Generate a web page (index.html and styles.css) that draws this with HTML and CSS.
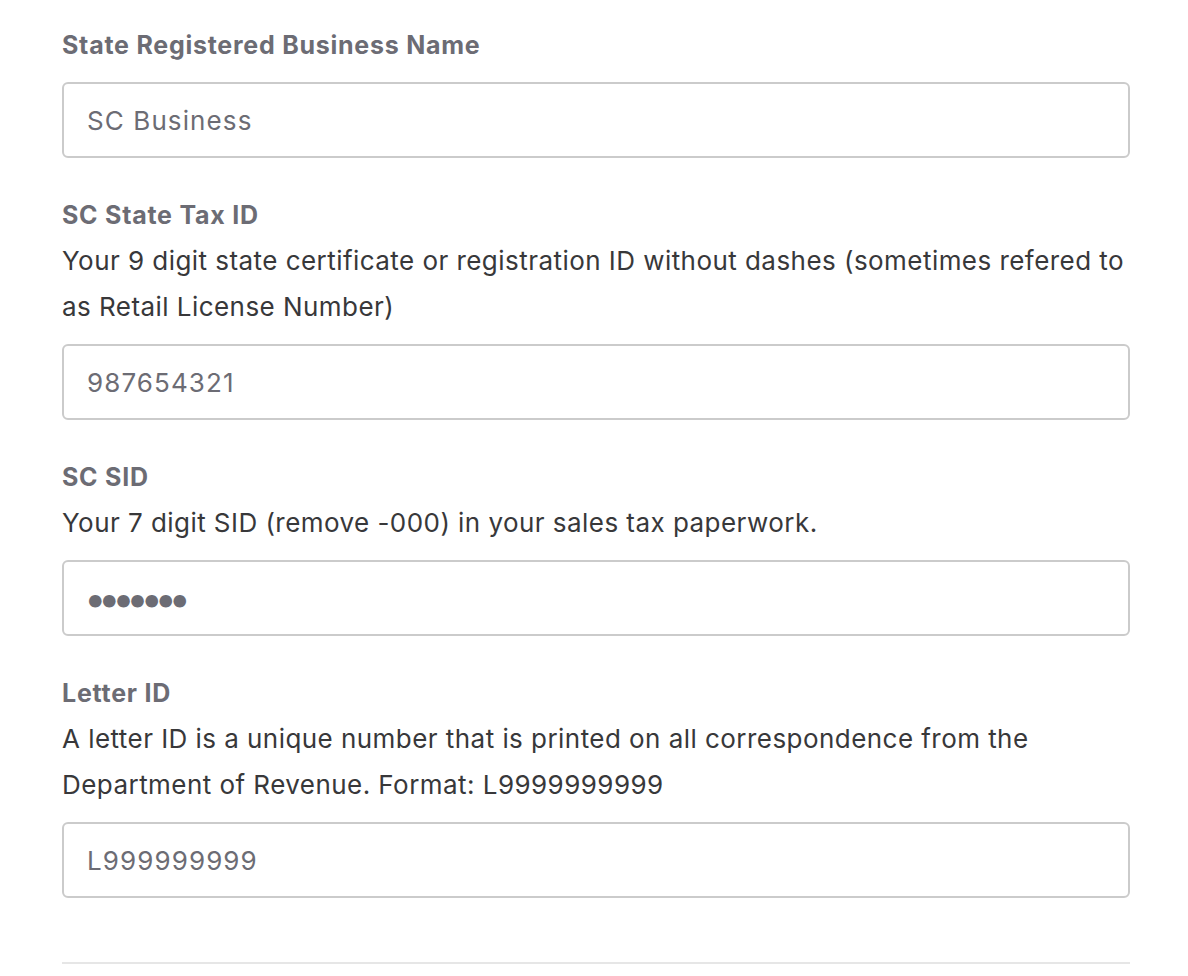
FILE: index.html
```html
<!DOCTYPE html>
<html lang="en">
<head>
<meta charset="utf-8">
<title>Business details</title>
<link rel="stylesheet" href="styles.css">
</head>
<body>
<form class="form">
  <div class="field">
    <label class="field-label" for="biz-name">State Registered Business Name</label>
    <input class="field-input" id="biz-name" type="text" value="SC Business">
  </div>
  <div class="field">
    <label class="field-label" for="tax-id">SC State Tax ID</label>
    <p class="field-help">Your 9 digit state certificate or registration ID without dashes (sometimes refered to as Retail License Number)</p>
    <input class="field-input" id="tax-id" type="text" value="987654321">
  </div>
  <div class="field">
    <label class="field-label" for="sid">SC SID</label>
    <p class="field-help">Your 7 digit SID (remove -000) in your sales tax paperwork.</p>
    <input class="field-input field-secret" id="sid" type="password" value="1234567">
  </div>
  <div class="field">
    <label class="field-label" for="letter-id">Letter ID</label>
    <p class="field-help">A letter ID is a unique number that is printed on all correspondence from the Department of Revenue. Format: L9999999999</p>
    <input class="field-input" id="letter-id" type="text" value="L999999999">
  </div>
  <hr class="divider">
</form>
</body>
</html>
```
FILE: styles.css
```css
* { box-sizing: border-box; }

html, body {
  margin: 0;
  padding: 0;
  background: #ffffff;
}

body {
  font-family: Inter, "Liberation Sans", sans-serif;
  -webkit-font-smoothing: antialiased;
}

.form {
  width: 1068px;
  margin-left: 62px;
  padding-top: 22px;
  display: flex;
  flex-direction: column;
}

.field {
  display: flex;
  flex-direction: column;
  margin-bottom: 34px;
}

.field-label {
  font-size: 25px;
  font-weight: 700;
  line-height: 46px;
  color: #6c6c74;
  letter-spacing: 0.75px;
}

.field-help {
  margin: 0;
  font-size: 26px;
  line-height: 46px;
  color: #38383a;
  letter-spacing: 0.45px;
}

.field-input {
  margin-top: 14px;
  height: 76px;
  width: 100%;
  border: 2px solid #cbcbcb;
  border-radius: 6px;
  padding: 0 23px;
  font-family: inherit;
  font-size: 26px;
  letter-spacing: 1.1px;
  color: #6c6c74;
  background: #ffffff;
  outline: none;
}

/* large round masking dots, packed closely */
.field-secret {
  font-size: 40px;
  letter-spacing: -8.4px;
  padding-left: 20px;
}

.divider {
  margin: 30px 0 0;
  border: 0;
  height: 2px;
  background: #e6e6e6;
}
```
